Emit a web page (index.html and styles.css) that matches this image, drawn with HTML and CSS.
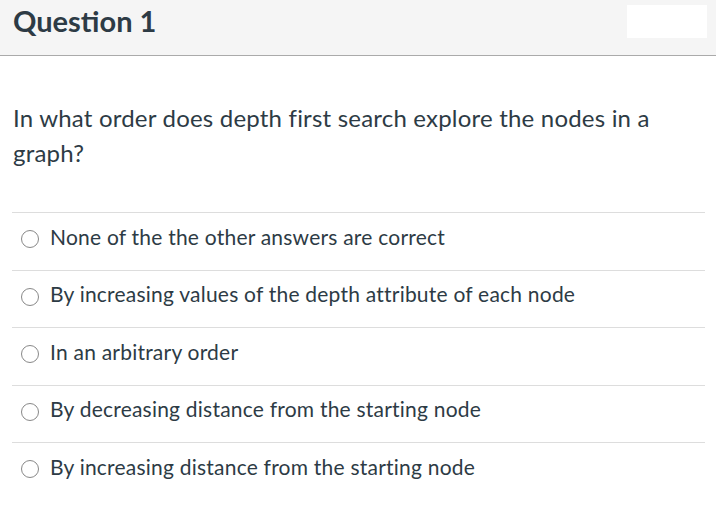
FILE: index.html
```html
<!DOCTYPE html>
<html>
<head>
<meta charset="utf-8">
<link rel="stylesheet" href="styles.css">
</head>
<body>
<div class="quiz">
  <header class="q-header">
    <h2 class="q-title">Question 1</h2>
    <div class="q-points"></div>
  </header>
  <div class="q-body">
    <p class="q-text">In what order does depth first search explore the nodes in a graph?</p>
    <ul class="answers">
      <li class="answer"><span class="radio"></span><span class="label">None of the the other answers are correct</span></li>
      <li class="answer"><span class="radio"></span><span class="label">By increasing values of the depth attribute of each node</span></li>
      <li class="answer"><span class="radio"></span><span class="label">In an arbitrary order</span></li>
      <li class="answer"><span class="radio"></span><span class="label">By decreasing distance from the starting node</span></li>
      <li class="answer"><span class="radio"></span><span class="label">By increasing distance from the starting node</span></li>
    </ul>
  </div>
</div>
</body>
</html>
```
FILE: styles.css
```css
html, body {
  margin: 0;
  padding: 0;
  background: #fff;
}
body {
  font-family: Lato, "Liberation Sans", sans-serif;
  color: #2d3b45;
}
.q-header {
  height: 55px;
  background: #f5f5f5;
  border-bottom: 1px solid #aaaaaa;
  display: flex;
  justify-content: space-between;
  align-items: flex-start;
  padding: 0 9px 0 13px;
}
.q-title {
  margin: 0;
  font-size: 29px;
  font-weight: 700;
  line-height: 42px;
}
.q-points {
  width: 80px;
  height: 33px;
  background: #fff;
  margin-top: 5px;
}
.q-body {
  padding: 0 11px 0 12px;
}
.q-text {
  margin: 0;
  padding: 44px 0 42px 1px;
  font-size: 24px;
  letter-spacing: 0.2px;
  line-height: 35px;
}
.answers {
  list-style: none;
  margin: 0;
  padding: 0;
}
.answer {
  display: flex;
  align-items: center;
  gap: 11px;
  height: 56.5px;
  box-sizing: border-box;
  height: 57.5px;
  border-top: 1px solid #dddddd;
  padding: 0 0 4px 9px;
  font-size: 21px;
  letter-spacing: 0.22px;
}
.radio {
  width: 16px;
  height: 16px;
  border: 1.5px solid #888;
  border-radius: 50%;
  flex: none;
}
.label {
  margin-bottom: 6px;
}
```
